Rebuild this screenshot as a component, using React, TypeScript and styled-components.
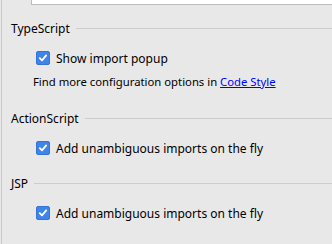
import React from "react";
import styled, { createGlobalStyle } from "styled-components";

const Global = createGlobalStyle`
  html, body { margin: 0; padding: 0; background: #e8e8e8; }
  body { font-family: "Noto Sans", "Liberation Sans", sans-serif; font-size: 12px; color: #000; }
`;

const Frame = styled.div`
  margin-left: 1px;
  border-left: 1px solid #c8c8c8;
  height: 244px;
  overflow: hidden;
  display: flex;
  flex-direction: column;
`;

const TopBox = styled.div`
  margin-left: 29px;
  height: 4px;
  background: #ffffff;
  border-left: 1px solid #bcbcbc;
  border-bottom: 1px solid #bcbcbc;
`;

const Header = styled.div<{ $mt: number }>`
  margin-top: ${(p) => p.$mt}px;
  height: 16px;
  padding-left: 9px;
  display: flex;
  align-items: center;
  gap: 6px;
  line-height: 16px;
  white-space: nowrap;
`;

const Rule = styled.div`
  flex: 1;
  height: 1px;
  background: #cdcdcd;
  margin-top: -2px;
`;

const CheckRow = styled.label<{ $mt: number }>`
  margin-top: ${(p) => p.$mt}px;
  height: 20px;
  padding-left: 34px;
  display: flex;
  align-items: center;
  gap: 6px;
  white-space: nowrap;
`;

const Box = styled.span`
  width: 14px;
  height: 14px;
  box-sizing: border-box;
  border-radius: 2px;
  background: #3f84e8;
  border: 1px solid #3574d4;
  display: flex;
  align-items: center;
  justify-content: center;
  flex: none;
`;

const Note = styled.div<{ $mt: number }>`
  margin-top: ${(p) => p.$mt}px;
  height: 16px;
  line-height: 16px;
  font-size: 11.3px;
  padding-left: 31px;
  white-space: nowrap;
`;

const Link = styled.a`
  color: #0000ff;
  text-decoration: underline;
`;

function Check() {
  return (
    <Box>
      <svg width="10" height="10" viewBox="0 0 10 10">
        <path d="M1.8 5.2 L4 7.4 L8.2 2.4" fill="none" stroke="#fff" strokeWidth="1.8" strokeLinecap="round" strokeLinejoin="round" />
      </svg>
    </Box>
  );
}

export default function App() {
  return (
    <>
      <Global />
      <Frame>
        <TopBox />
        <Header $mt={16}>TypeScript<Rule /></Header>
        <CheckRow $mt={11}><Check />Show import popup</CheckRow>
        <Note $mt={6}>Find more configuration options in <Link href="#">Code Style</Link></Note>
        <Header $mt={21}>ActionScript<Rule /></Header>
        <CheckRow $mt={11}><Check />Add unambiguous imports on the fly</CheckRow>
        <Header $mt={18}>JSP<Rule /></Header>
        <CheckRow $mt={11}><Check />Add unambiguous imports on the fly</CheckRow>
      </Frame>
    </>
  );
}
